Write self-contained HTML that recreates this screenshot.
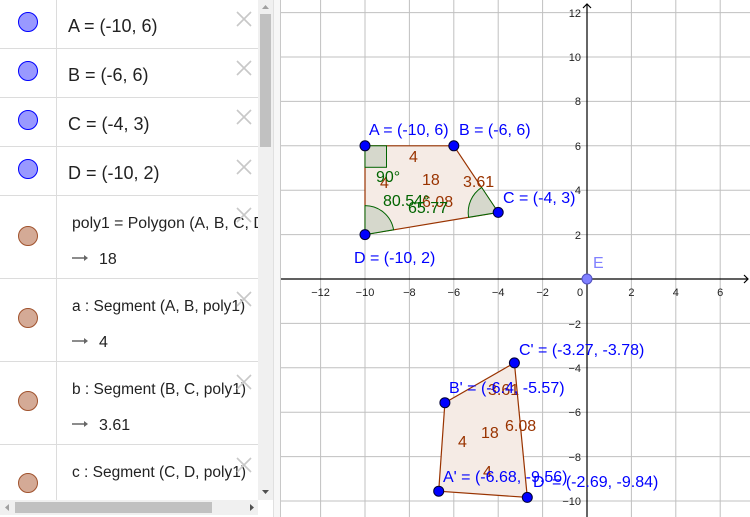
<!DOCTYPE html>
<html><head><meta charset="utf-8"><style>
html,body{margin:0;padding:0;background:#fff;width:750px;height:517px;overflow:hidden}
svg{display:block;font-family:"Liberation Sans",sans-serif}
</style></head><body>
<svg width="750" height="517" viewBox="0 0 750 517" xmlns="http://www.w3.org/2000/svg">
<defs><clipPath id="lp"><rect x="0" y="0" width="258" height="500"/></clipPath></defs>
<rect width="750" height="517" fill="#fff"/>
<g stroke="#dcdcdc" stroke-width="1">
<line x1="56.5" y1="0" x2="56.5" y2="500"/>
<line x1="0" y1="48.5" x2="258" y2="48.5"/>
<line x1="0" y1="97.5" x2="258" y2="97.5"/>
<line x1="0" y1="146.5" x2="258" y2="146.5"/>
<line x1="0" y1="195.5" x2="258" y2="195.5"/>
<line x1="0" y1="278.5" x2="258" y2="278.5"/>
<line x1="0" y1="361.5" x2="258" y2="361.5"/>
<line x1="0" y1="444.5" x2="258" y2="444.5"/>
</g>
<g fill="#9999ff" stroke="#0000ff" stroke-width="1">
<circle cx="28" cy="22" r="9.5"/><circle cx="28" cy="71" r="9.5"/><circle cx="28" cy="120" r="9.5"/><circle cx="28" cy="169" r="9.5"/>
</g>
<g fill="#d4aa96" stroke="#a0522d" stroke-width="1">
<circle cx="28" cy="236" r="9.5"/><circle cx="28" cy="318" r="9.5"/><circle cx="28" cy="401" r="9.5"/><circle cx="28" cy="483" r="9.5"/>
</g>
<g font-size="18" fill="#222" clip-path="url(#lp)">
<text x="68" y="32">A = (-10, 6)</text>
<text x="68" y="81">B = (-6, 6)</text>
<text x="68" y="130">C = (-4, 3)</text>
<text x="68" y="179">D = (-10, 2)</text>
<text x="72" y="228" font-size="15.8">poly1 = Polygon (A, B, C, D)</text>
<text x="99" y="264" font-size="16">18</text>
<text x="72" y="311" font-size="15.5">a : Segment (A, B, poly1)</text>
<text x="99" y="347" font-size="16">4</text>
<text x="72" y="394" font-size="15.5">b : Segment (B, C, poly1)</text>
<text x="99" y="430" font-size="16">3.61</text>
<text x="72" y="477" font-size="15.5">c : Segment (C, D, poly1)</text>
</g>
<g stroke="#666" stroke-width="1.5">
<line x1="72" y1="258" x2="86" y2="258"/><line x1="72" y1="341" x2="86" y2="341"/><line x1="72" y1="424" x2="86" y2="424"/>
</g>
<g fill="#666"><path d="M84 255l4 3l-4 3z"/><path d="M84 338l4 3l-4 3z"/><path d="M84 421l4 3l-4 3z"/></g>
<g stroke="#c8c8c8" stroke-width="1.6">
<path d="M237 12l14 14M251 12l-14 14"/>
<path d="M237 61l14 14M251 61l-14 14"/>
<path d="M237 110l14 14M251 110l-14 14"/>
<path d="M237 160l14 14M251 160l-14 14"/>
<path d="M237 208l14 14M251 208l-14 14"/>
<path d="M237 292l14 14M251 292l-14 14"/>
<path d="M237 375l14 14M251 375l-14 14"/>
<path d="M237 458l14 14M251 458l-14 14"/>
</g>
<rect x="258" y="0" width="15" height="500" fill="#f0f0f0"/>
<rect x="260" y="14" width="11" height="133" fill="#c1c1c1"/>
<path d="M262 9l3.5-4l3.5 4z" fill="#a0a0a0"/>
<path d="M262 490l3.5 4l3.5-4z" fill="#505050"/>
<rect x="0" y="500" width="258" height="15" fill="#f0f0f0"/>
<rect x="15" y="502" width="197" height="11" fill="#c1c1c1"/>
<path d="M9 504l-4 3.5l4 3.5z" fill="#a0a0a0"/>
<path d="M250 504l4 3.5l-4 3.5z" fill="#505050"/>
<rect x="273" y="0" width="7" height="517" fill="#f7f7f7"/>
<line x1="273.5" y1="0" x2="273.5" y2="517" stroke="#e0e0e0"/>
<line x1="280.5" y1="0" x2="280.5" y2="517" stroke="#c8c8c8"/>
<svg x="281" y="0" width="469" height="517" viewBox="281 0 469 517" overflow="hidden">
<g stroke="#c0c0c0" stroke-width="1">
<line x1="320.6" y1="0" x2="320.6" y2="517"/><line x1="365" y1="0" x2="365" y2="517"/><line x1="409.4" y1="0" x2="409.4" y2="517"/><line x1="453.8" y1="0" x2="453.8" y2="517"/><line x1="498.2" y1="0" x2="498.2" y2="517"/><line x1="542.6" y1="0" x2="542.6" y2="517"/><line x1="631.4" y1="0" x2="631.4" y2="517"/><line x1="675.8" y1="0" x2="675.8" y2="517"/><line x1="720.2" y1="0" x2="720.2" y2="517"/>
<line x1="281" y1="12.6" x2="750" y2="12.6"/><line x1="281" y1="57" x2="750" y2="57"/><line x1="281" y1="101.4" x2="750" y2="101.4"/><line x1="281" y1="145.8" x2="750" y2="145.8"/><line x1="281" y1="190.2" x2="750" y2="190.2"/><line x1="281" y1="234.6" x2="750" y2="234.6"/><line x1="281" y1="323.4" x2="750" y2="323.4"/><line x1="281" y1="367.8" x2="750" y2="367.8"/><line x1="281" y1="412.2" x2="750" y2="412.2"/><line x1="281" y1="456.6" x2="750" y2="456.6"/><line x1="281" y1="501" x2="750" y2="501"/>
</g>
<g stroke="#000" stroke-width="1.2" fill="none">
<line x1="281" y1="279" x2="748" y2="279"/><line x1="587" y1="4" x2="587" y2="517"/>
<path d="M583 8l4-4l4 4"/><path d="M744 275l4 4l-4 4"/>
</g>
<g font-size="11" fill="#222" text-anchor="middle">
<text x="320.6" y="296">−12</text><text x="365" y="296">−10</text><text x="409.4" y="296">−8</text><text x="453.8" y="296">−6</text><text x="498.2" y="296">−4</text><text x="542.6" y="296">−2</text><text x="580" y="296">0</text><text x="631.4" y="296">2</text><text x="675.8" y="296">4</text><text x="720.2" y="296">6</text>
</g>
<g font-size="11" fill="#222" text-anchor="end">
<text x="581" y="17">12</text><text x="581" y="61">10</text><text x="581" y="105">8</text><text x="581" y="150">6</text><text x="581" y="194">4</text><text x="581" y="239">2</text><text x="581" y="328">−2</text><text x="581" y="372">−4</text><text x="581" y="416">−6</text><text x="581" y="461">−8</text><text x="581" y="505">−10</text>
</g>
<polygon points="365,145.8 453.8,145.8 498.2,212.4 365,234.6" fill="#f5ebe5" stroke="#993300" stroke-width="1.2"/>
<polygon points="438.7,491.2 444.9,402.7 514.4,362.9 527.3,497.4" fill="#f5ebe5" stroke="#993300" stroke-width="1.2"/>
<rect x="365" y="145.8" width="21.5" height="21.5" fill="#d6d8cc" stroke="#006400" stroke-width="1"/>
<path d="M365 234.6L365 205.6A29 29 0 0 1 393.6 229.8Z" fill="#d6d8cc" stroke="#006400" stroke-width="1"/>
<path d="M498.2 212.4L481.6 187.4A30 30 0 0 0 468.6 217.3Z" fill="#d6d8cc" stroke="#006400" stroke-width="1"/>
<g fill="#993300" font-size="16">
<text x="409" y="162">4</text><text x="422" y="185">18</text><text x="380" y="188">4</text><text x="463" y="187">3.61</text><text x="422" y="207">6.08</text>
<text x="488" y="395">3.61</text><text x="505" y="431">6.08</text><text x="481" y="438">18</text><text x="458" y="447">4</text><text x="483" y="477">4</text>
</g>
<g fill="#006400" font-size="16">
<text x="376" y="182">90°</text><text x="383" y="206">80.54°</text><text x="408" y="213">65.77</text>
</g>
<g fill="#0000ff" stroke="#000033" stroke-width="1">
<circle cx="365" cy="145.8" r="5"/><circle cx="453.8" cy="145.8" r="5"/><circle cx="498.2" cy="212.4" r="5"/><circle cx="365" cy="234.6" r="5"/>
<circle cx="438.7" cy="491.2" r="5"/><circle cx="444.9" cy="402.7" r="5"/><circle cx="514.4" cy="362.9" r="5"/><circle cx="527.3" cy="497.4" r="5"/>
</g>
<circle cx="587" cy="279" r="5" fill="#8080ff" stroke="#5050c0"/>
<g fill="#0000ff" font-size="16">
<text x="369" y="135">A = (-10, 6)</text><text x="459" y="135">B = (-6, 6)</text><text x="503" y="203">C = (-4, 3)</text><text x="354" y="263">D = (-10, 2)</text>
<text x="519" y="355">C' = (-3.27, -3.78)</text><text x="449" y="393">B' = (-6.4, -5.57)</text><text x="443" y="482">A' = (-6.68, -9.56)</text><text x="533" y="487">D' = (-2.69, -9.84)</text>
</g>
<text x="593" y="268" fill="#8080ff" font-size="16">E</text>
</svg>
</svg>
</body></html>
